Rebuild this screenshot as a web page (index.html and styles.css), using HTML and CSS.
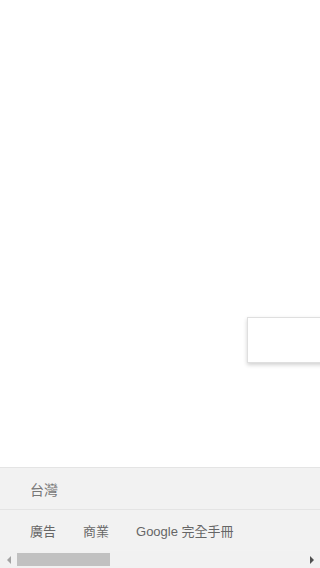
FILE: index.html
```html
<!DOCTYPE html>
<html lang="zh-TW">
<head>
<meta charset="utf-8">
<title>Google</title>
<link rel="stylesheet" href="styles.css">
</head>
<body>
<div class="page">
  <main class="main">
    <div class="search-box"></div>
  </main>
  <footer class="footer">
    <div class="country">台灣</div>
    <div class="links">
      <a class="link" href="#">廣告</a>
      <a class="link" href="#">商業</a>
      <a class="link" href="#">Google 完全手冊</a>
    </div>
  </footer>
  <div class="hscroll">
    <span class="arrow arrow-left"></span>
    <span class="track"><span class="thumb"></span></span>
    <span class="arrow arrow-right"></span>
  </div>
</div>
</body>
</html>
```
FILE: styles.css
```css
html, body {
  margin: 0;
  padding: 0;
  background: #fff;
  overflow: hidden;
}
.page {
  width: 320px;
  height: 568px;
  display: flex;
  flex-direction: column;
  font-family: "Liberation Sans", Arial, "Noto Sans CJK TC", sans-serif;
  font-size: 14px;
  overflow: hidden;
}
.main {
  flex: 1;
  padding: 317px 0 0 247px;
  overflow: hidden;
}
.search-box {
  width: 100px;
  height: 44px;
  border: 1px solid #dfdfdf;
  box-shadow: 0 2px 4px rgba(0,0,0,0.18);
  background: #fff;
}
.footer {
  background: #f2f2f2;
  border-top: 1px solid #e4e4e4;
}
.country {
  height: 41px;
  display: flex;
  align-items: center;
  padding-left: 30px;
  font-size: 14px;
  color: #777;
  border-bottom: 1px solid #e4e4e4;
}
.links {
  height: 41px;
  display: flex;
  align-items: center;
  padding-left: 30px;
  gap: 27px;
  font-size: 13px;
}
.link {
  color: #666;
  text-decoration: none;
  white-space: nowrap;
}
.hscroll {
  height: 17px;
  background: #f1f1f1;
  display: flex;
  align-items: center;
}
.arrow {
  width: 17px;
  height: 17px;
  display: flex;
  align-items: center;
  justify-content: center;
  flex: none;
}
.arrow::before {
  content: "";
  width: 0;
  height: 0;
  border-top: 4px solid transparent;
  border-bottom: 4px solid transparent;
}
.arrow-left::before {
  border-right: 4px solid #a3a3a3;
}
.arrow-right::before {
  border-left: 4px solid #505050;
}
.track {
  flex: 1;
  height: 17px;
  display: flex;
  align-items: center;
}
.thumb {
  width: 93px;
  height: 13px;
  background: #c1c1c1;
}
```
